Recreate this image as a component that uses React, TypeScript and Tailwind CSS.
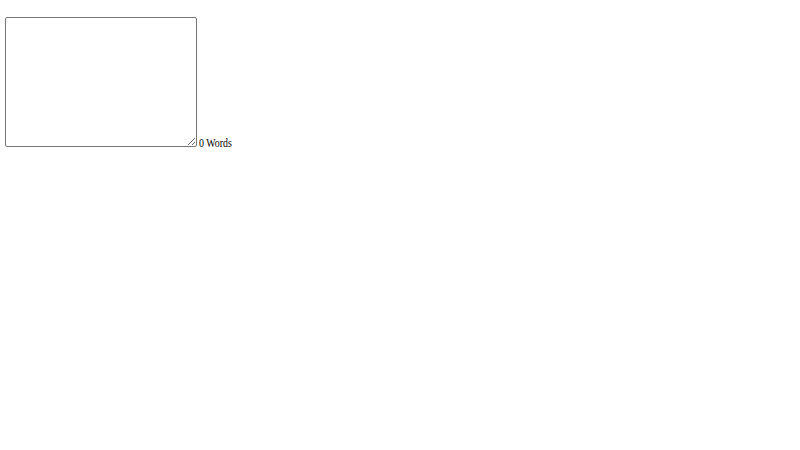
import React, { useState } from "react";

export default function App() {
  const [text, setText] = useState("");
  const words = text.trim() === "" ? 0 : text.trim().split(/\s+/).length;
  return (
    <div className="min-h-[450px] w-full bg-white pt-[17px] pl-[5px]" style={{ fontFamily: '"Liberation Serif", serif' }}>
      <div className="flex items-end">
        <textarea
          value={text}
          onChange={(e) => setText(e.target.value)}
          className="block h-[130px] w-[192px] rounded-[2px] border border-[#767676] bg-white p-[2px] text-[13px] outline-none"
        />
        <span className="ml-[2px] inline-block origin-left scale-x-[0.76] whitespace-nowrap text-[13px] leading-[13px] text-black mb-[-2px]">
          {words} Words
        </span>
      </div>
    </div>
  );
}
